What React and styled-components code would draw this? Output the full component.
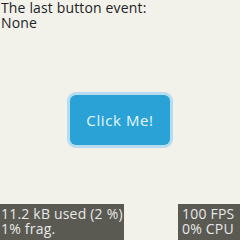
import React, { useState } from "react";
import styled, { createGlobalStyle } from "styled-components";

const Global = createGlobalStyle`
  html, body { margin: 0; padding: 0; }
  body {
    width: 240px;
    height: 240px;
    overflow: hidden;
    background: #f2f2ea;
    font-family: "Open Sans", "DejaVu Sans", sans-serif;
  }
`;

const Screen = styled.div`
  position: relative;
  width: 240px;
  height: 240px;
  display: flex;
  flex-direction: column;
  color: #222226;
`;

const Label = styled.div`
  height: 30px;
  padding: 0 0 0 1px;
  font-size: 14px;
  line-height: 15px;
  letter-spacing: 0.15px;
  white-space: pre-line;
`;

const Center = styled.div`
  flex: 1;
  display: flex;
  align-items: center;
  justify-content: center;
  padding-bottom: 30px;
`;

const Button = styled.button`
  width: 100px;
  height: 50px;
  border: none;
  border-radius: 6px;
  background: #2aa2d6;
  color: #e6f6ff;
  font-family: inherit;
  font-size: 15px;
  letter-spacing: 0.6px;
  box-shadow: 0 0 0 3px #b8dcef;
  cursor: pointer;
`;

const Monitor = styled.div`
  position: absolute;
  bottom: 0;
  ${(p) => (p.$right ? "right: 0;" : "left: 0;")}
  width: ${(p) => p.$w}px;
  height: 36px;
  box-sizing: border-box;
  padding: 2px 0 0 ${(p) => (p.$right ? 4 : 1)}px;
  background: #5a5a52;
  color: #e8e8e8;
  font-size: 14px;
  letter-spacing: 0.2px;
  line-height: 15px;
  white-space: pre;
`;

export default function App() {
  const [event, setEvent] = useState("None");
  return (
    <Screen>
      <Global />
      <Label>{"The last button event:\n" + event}</Label>
      <Center>
        <Button onClick={() => setEvent("Clicked")}>Click Me!</Button>
      </Center>
      <Monitor $w={124}>{"11.2 kB used (2 %)\n1% frag."}</Monitor>
      <Monitor $right $w={62}>{"100 FPS\n0% CPU"}</Monitor>
    </Screen>
  );
}
